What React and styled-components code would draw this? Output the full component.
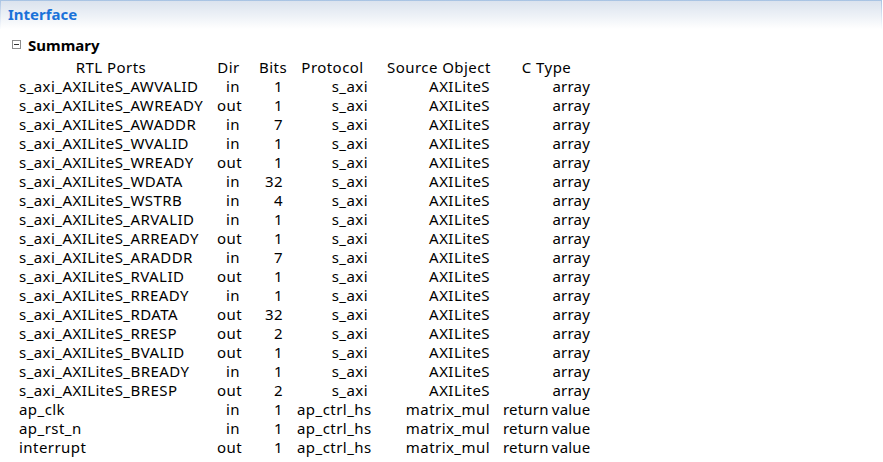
import React from "react";
import styled, { createGlobalStyle } from "styled-components";

const Global = createGlobalStyle`
  html, body { margin: 0; padding: 0; background: #fff; }
  body { font-family: "Noto Sans", "Open Sans", sans-serif; color: #111; }
`;

const Page = styled.div`
  width: 883px;
  height: 462px;
  overflow: hidden;
  background: #fff;
`;

const TitleBar = styled.div`
  box-sizing: border-box;
  width: 882px;
  height: 29px;
  padding: 3px 0 0 7px;
  border: 1px solid transparent;
  border-bottom-width: 0;
  border-image: linear-gradient(to bottom, #a8c3e3 0%, #cfdcee 40%, #ffffff 100%) 1;
  background: linear-gradient(to bottom, #dbe3ee 0%, #eef2f7 55%, #ffffff 100%);
  font-size: 15px;
  font-weight: 700;
  color: #1a72d9;
  line-height: 20px;
`;

const SectionHead = styled.div`
  display: flex;
  align-items: center;
  gap: 7px;
  margin: 6px 0 0 12px;
  height: 19px;
  font-size: 15px;
  font-weight: 700;
  color: #000;
`;

const Toggle = styled.span`
  box-sizing: border-box;
  width: 9px;
  height: 9px;
  border: 1px solid #8c8c8c;
  position: relative;
  flex: none;
  &::after {
    content: "";
    position: absolute;
    left: 1px;
    right: 1px;
    top: 3px;
    height: 1px;
    background: #333;
  }
`;

const Grid = styled.div`
  display: grid;
  grid-template-columns: 184px 37px 43px 85px 122px 100px;
  grid-auto-rows: 19px;
  margin: 4px 0 0 19px;
  font-size: 15px;
  letter-spacing: 0.45px;
  line-height: 19px;
  color: #000;
`;

const pads = [0, 14, 19, 14, 19, 13];

const Cell = styled.div`
  box-sizing: border-box;
  padding-left: ${(p) => pads[p.$col]}px;
  text-align: ${(p) => (p.$head ? "center" : p.$col === 0 ? "left" : "right")};
  letter-spacing: ${(p) => (!p.$head && p.$col === 5 ? "0.2px" : "inherit")};
  word-spacing: ${(p) => (p.$head ? "0" : "-1px")};
  white-space: nowrap;
`;

const headers = ["RTL Ports", "Dir", "Bits", "Protocol", "Source Object", "C Type"];

const axi = [
  ["AWVALID", "in", 1],
  ["AWREADY", "out", 1],
  ["AWADDR", "in", 7],
  ["WVALID", "in", 1],
  ["WREADY", "out", 1],
  ["WDATA", "in", 32],
  ["WSTRB", "in", 4],
  ["ARVALID", "in", 1],
  ["ARREADY", "out", 1],
  ["ARADDR", "in", 7],
  ["RVALID", "out", 1],
  ["RREADY", "in", 1],
  ["RDATA", "out", 32],
  ["RRESP", "out", 2],
  ["BVALID", "out", 1],
  ["BREADY", "in", 1],
  ["BRESP", "out", 2],
];

const rows = [
  ...axi.map(([n, d, b]) => ["s_axi_AXILiteS_" + n, d, b, "s_axi", "AXILiteS", "array"]),
  ["ap_clk", "in", 1, "ap_ctrl_hs", "matrix_mul", "return value"],
  ["ap_rst_n", "in", 1, "ap_ctrl_hs", "matrix_mul", "return value"],
  ["interrupt", "out", 1, "ap_ctrl_hs", "matrix_mul", "return value"],
];

export default function App() {
  return (
    <Page>
      <Global />
      <TitleBar>Interface</TitleBar>
      <SectionHead>
        <Toggle />
        Summary
      </SectionHead>
      <Grid>
        {headers.map((h, i) => (
          <Cell key={h} $col={i} $head>
            {h}
          </Cell>
        ))}
        {rows.map((r, ri) =>
          r.map((v, ci) => (
            <Cell key={ri + "-" + ci} $col={ci}>
              {v}
            </Cell>
          ))
        )}
      </Grid>
    </Page>
  );
}
